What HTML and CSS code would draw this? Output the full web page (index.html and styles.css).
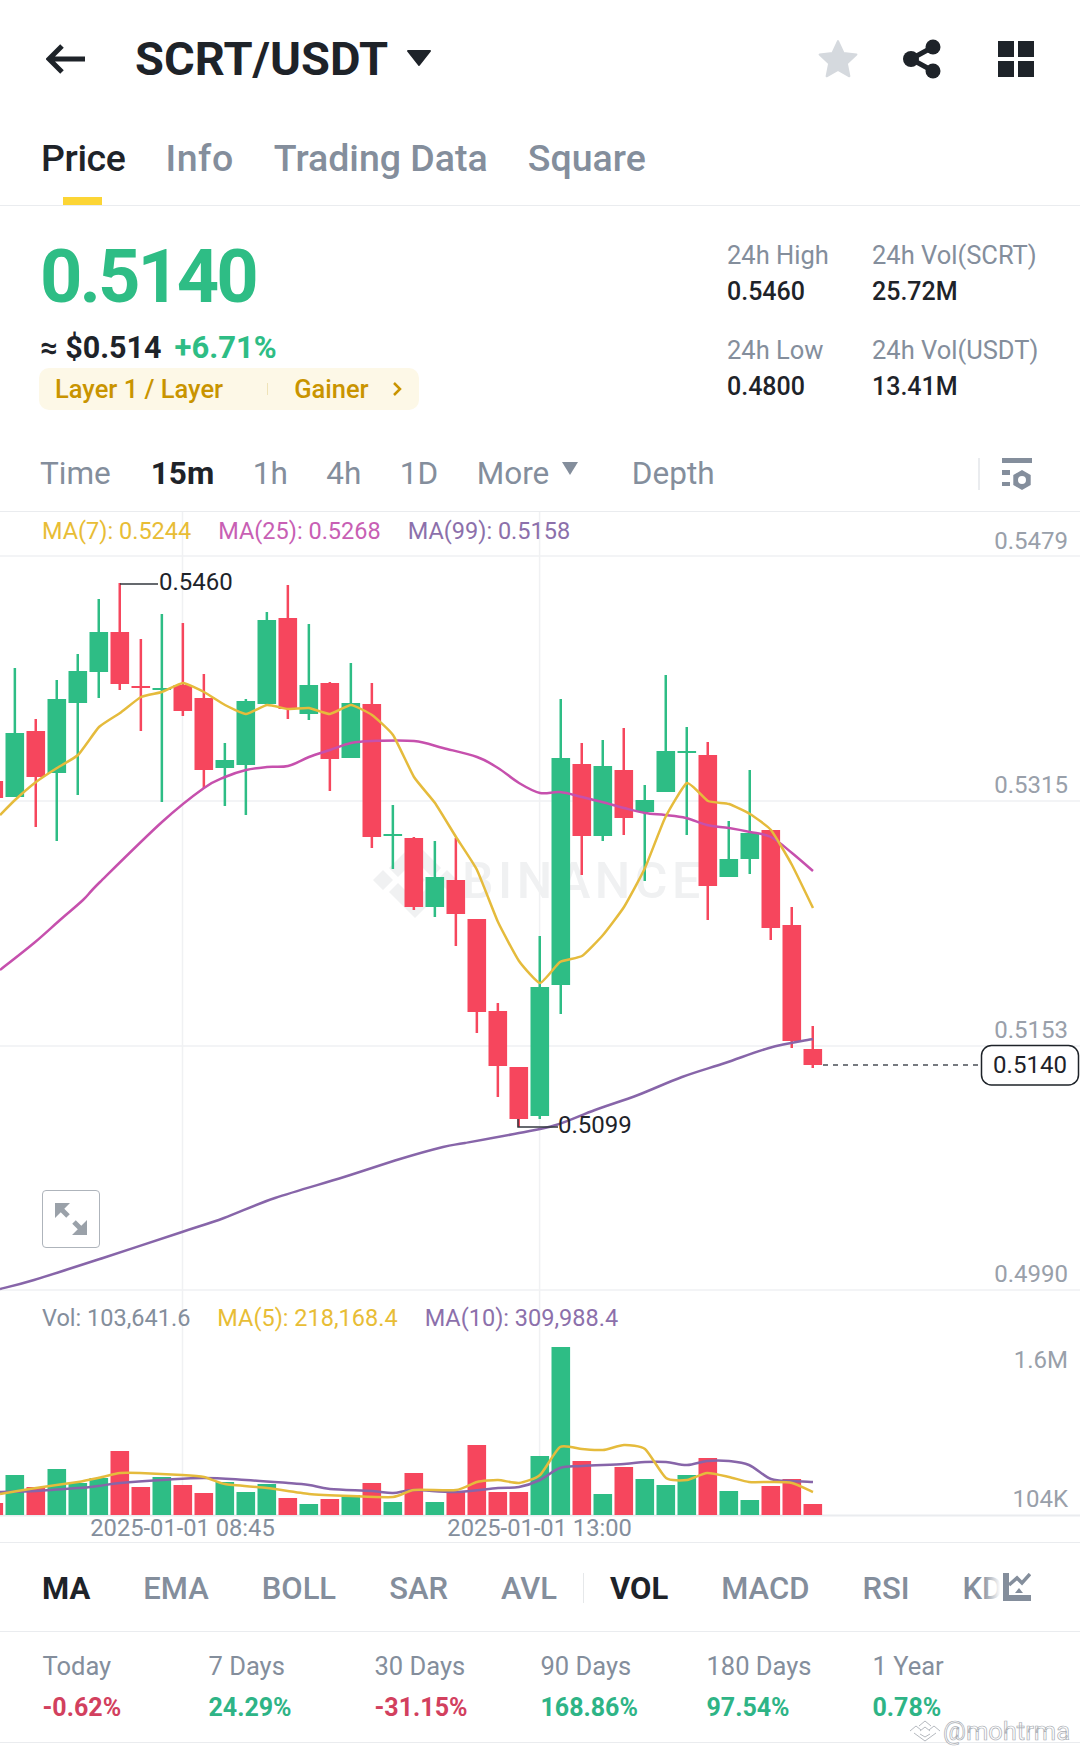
FILE: index.html
```html
<!DOCTYPE html>
<html lang="en">
<head>
  <meta charset="UTF-8">
  <meta name="viewport" content="width=device-width, initial-scale=1.0">
  <title>SCRT/USDT</title>
  <link rel="stylesheet" href="styles.css">
</head>
<body>
  <header class="topbar">
    <svg class="back-icon" viewBox="0 0 40 30"><path d="M39 15H3M16 2 3 15l13 13"/></svg>
    <h1 class="pair">SCRT/USDT</h1>
    <svg class="pair-caret" viewBox="0 0 26 18"><path d="M2 2h22L13 16z"/></svg>
    <div class="topbar-icons">
      <svg class="star-icon" viewBox="0 0 40 38"><path d="M20 2l5.2 11.3 12.3 1.5-9.1 8.4 2.4 12.2L20 29.3 9.2 35.4l2.4-12.2-9.1-8.4 12.3-1.5z"/></svg>
      <svg class="share-icon" viewBox="0 0 38 38"><circle cx="30" cy="7" r="7.5"/><circle cx="8" cy="19" r="8"/><circle cx="30" cy="31" r="7.5"/><path d="M30 7 8 19l22 12"/></svg>
      <svg class="grid-icon" viewBox="0 0 36 36"><rect x="0" y="0" width="16" height="16"/><rect x="20" y="0" width="16" height="16"/><rect x="0" y="20" width="16" height="16"/><rect x="20" y="20" width="16" height="16"/></svg>
    </div>
  </header>

  <nav class="tabs">
    <a class="tab active">Price</a>
    <a class="tab tab-info">Info</a>
    <a class="tab">Trading Data</a>
    <a class="tab">Square</a>
  </nav>

  <section class="summary">
    <div class="summary-left">
      <div class="last-price">0.5140</div>
      <div class="change-row"><span class="usd">≈ $0.514</span><span class="change">+6.71%</span></div>
      <div class="tag-pill">
        <span>Layer 1 / Layer</span>
        <i class="tag-divider"></i>
        <span>Gainer</span>
        <svg class="tag-chevron" viewBox="0 0 10 16"><path d="M2 2l6 6-6 6"/></svg>
      </div>
    </div>
    <div class="summary-stats">
      <div class="stat"><span class="stat-label">24h High</span><span class="stat-value">0.5460</span></div>
      <div class="stat"><span class="stat-label">24h Vol(SCRT)</span><span class="stat-value">25.72M</span></div>
      <div class="stat"><span class="stat-label">24h Low</span><span class="stat-value">0.4800</span></div>
      <div class="stat"><span class="stat-label">24h Vol(USDT)</span><span class="stat-value">13.41M</span></div>
    </div>
  </section>

  <div class="timeframes">
    <span class="tf-first">Time</span>
    <span class="selected">15m</span>
    <span>1h</span>
    <span>4h</span>
    <span>1D</span>
    <span class="more">More<svg class="more-caret" viewBox="0 0 16 13"><path d="M0 0h16L8 13z"/></svg></span>
    <span class="depth">Depth</span>
    <i class="tf-divider"></i>
    <svg class="tf-icon" viewBox="0 0 30 32">
      <rect x="0" y="0" width="30" height="5"/>
      <rect x="0" y="12" width="8" height="5"/>
      <rect x="0" y="24" width="8" height="4"/>
      <path fill-rule="evenodd" d="M20 12l8.700 5v10L20 32l-8.700-5V17zM20 18a4 4 0 1 0 0 8 4 4 0 0 0 0-8z"/>
    </svg>
  </div>

  <section class="chart">
    <svg class="chart-svg" viewBox="0 512 1080 1030">
      <g class="grid-lines">
        <path d="M0 556H1080M0 801H1080M0 1046H1080M0 1290H1080M182.500 512V1515M539.600 512V1515"/>
        <path class="vol-base" d="M0 1515.500H1080"/>
      </g>
      <g class="brand-mark">
        <path d="M383 870l10 10-10 10-10-10zM415 870l10 10-10 10-10-10zM447 870l10 10-10 10-10-10zM415 842l26 26-9 9-17-17-17 17-9-9zM415 918l26-26-9-9-17 17-17-17-9 9z"/>
        <text x="462" y="898">BINANCE</text>
      </g>
      <g id="volumes"></g>
      <g id="candles"></g>
      <g id="lines"></g>
      <path class="marker-line" d="M120 584H158M518 1119V1127H558"/>
      <text class="marker-text" x="159" y="582">0.5460</text>
      <text class="marker-text" x="558" y="1125">0.5099</text>
      <text class="axis-label" x="1068" y="541">0.5479</text>
      <text class="axis-label" x="1068" y="785">0.5315</text>
      <text class="axis-label" x="1068" y="1030">0.5153</text>
      <text class="axis-label" x="1068" y="1274">0.4990</text>
      <text class="axis-label" x="1068" y="1360">1.6M</text>
      <text class="axis-label" x="1068" y="1499">104K</text>
      <text class="date-label" x="182.500" y="1528">2025-01-01 08:45</text>
      <text class="date-label" x="539.600" y="1528">2025-01-01 13:00</text>
      <path class="price-dash" d="M823 1065H981"/>
      <rect class="price-box" x="981.500" y="1045.500" width="97" height="39.500" rx="10"/>
      <text class="price-box-text" x="1030" y="1065">0.5140</text>
    </svg>

    <div class="legend legend-price">
      <span class="c-yellow">MA(7): 0.5244</span>
      <span class="c-magenta">MA(25): 0.5268</span>
      <span class="c-purple">MA(99): 0.5158</span>
    </div>
    <div class="legend legend-vol">
      <span class="c-grey">Vol: 103,641.6</span>
      <span class="c-yellow">MA(5): 218,168.4</span>
      <span class="c-purple">MA(10): 309,988.4</span>
    </div>

    <button class="expand-btn">
      <svg viewBox="0 0 34 34"><path d="M1 1h15L1 16zM33 33H18l15-15z"/><path class="expand-stem" d="M8 8l6 6M26 26l-6-6"/></svg>
    </button>
  </section>

  <div class="indicators">
    <span class="selected">MA</span>
    <span>EMA</span>
    <span>BOLL</span>
    <span>SAR</span>
    <span>AVL</span>
    <i class="ind-divider"></i>
    <span class="selected">VOL</span>
    <span>MACD</span>
    <span>RSI</span>
    <span>KDJ</span>
    <div class="ind-icon-wrap">
      <svg class="ind-icon" viewBox="0 0 28 28">
        <path d="M0 0h6v22h22v6H0z"/>
        <path class="ind-zig" d="M6 12l8-7 5 5 8-9"/>
        <path d="M16 15l4 5h-8z"/>
      </svg>
    </div>
  </div>

  <div class="returns">
    <div class="ret"><span class="ret-label">Today</span><span class="ret-value down">-0.62%</span></div>
    <div class="ret"><span class="ret-label">7 Days</span><span class="ret-value up">24.29%</span></div>
    <div class="ret"><span class="ret-label">30 Days</span><span class="ret-value down">-31.15%</span></div>
    <div class="ret"><span class="ret-label">90 Days</span><span class="ret-value up">168.86%</span></div>
    <div class="ret"><span class="ret-label">180 Days</span><span class="ret-value up">97.54%</span></div>
    <div class="ret"><span class="ret-label">1 Year</span><span class="ret-value up">0.78%</span></div>
  </div>

  <div class="credit">
    <svg class="credit-logo" viewBox="0 0 32 22"><path d="M10 6l6-5 6 5M1 11l6-5 5 4M31 11l-6-5-5 4M11 11l5-4 5 4M5 13l11 8 11-8M11 14l5 3 5-3"/></svg>
    <span>@mohtrma</span>
  </div>

  <script src="chart.js"></script>
</body>
</html>
```

FILE: styles.css
```css
* { box-sizing: border-box; }
html, body {
  margin: 0;
  padding: 0;
  background: #fff;
}
body {
  position: relative;
  width: 1080px;
  height: 1752px;
  overflow: hidden;
  font-family: Roboto, "Liberation Sans", sans-serif;
  color: #1e2329;
}

/* top bar */
.topbar {
  display: flex;
  align-items: center;
  height: 103px;
  padding: 14px 0 0 46px;
}
.back-icon {
  width: 40px;
  height: 30px;
  fill: none;
  stroke: #1e2329;
  stroke-width: 5;
}
.pair {
  margin: 0 0 0 49px;
  font-size: 47px;
  line-height: 60px;
  font-weight: 700;
}
.pair-caret {
  width: 26px;
  height: 18px;
  margin: -2px 0 0 18px;
  fill: #1e2329;
  stroke: #1e2329;
  stroke-width: 2;
  stroke-linejoin: round;
}
.topbar-icons {
  display: flex;
  align-items: center;
  margin-left: auto;
  margin-right: 46px;
}
.star-icon {
  width: 42px;
  height: 40px;
  fill: #d5d9de;
  stroke: #d5d9de;
  stroke-width: 2;
  stroke-linejoin: round;
}
.share-icon {
  width: 38px;
  height: 38px;
  margin-left: 44px;
  fill: #1e2329;
  stroke: none;
  overflow: visible;
}
.share-icon path {
  fill: none;
  stroke: #1e2329;
  stroke-width: 5;
}
.grid-icon {
  width: 36px;
  height: 36px;
  margin-left: 57px;
  fill: #1e2329;
}

/* tabs */
.tabs {
  display: flex;
  gap: 40px;
  height: 103px;
  padding: 35px 0 0 41px;
  border-bottom: 1px solid #eaecef;
}
.tab {
  position: relative;
  font-size: 37.500px;
  line-height: 40px;
  font-weight: 500;
  color: #848e9c;
}
.tab-info { letter-spacing: 0.600px; }
.tab.active {
  color: #1e2329;
  letter-spacing: -0.400px;
}
.tab.active::after {
  content: "";
  position: absolute;
  left: 22px;
  top: 59px;
  width: 39px;
  height: 8px;
  background: #fcd535;
}

/* price summary */
.summary {
  display: flex;
  height: 234px;
}
.summary-left {
  width: 727px;
  padding: 34px 0 0 39px;
}
.last-price {
  font-size: 74px;
  line-height: 74px;
  font-weight: 700;
  letter-spacing: -3px;
  color: #2ebd85;
  padding-left: 1px;
}
.change-row {
  display: flex;
  gap: 13px;
  margin-top: 16px;
  font-size: 30.500px;
  line-height: 36px;
  font-weight: 700;
}
.usd { padding-left: 1px; }
.change {
  font-size: 31px;
  color: #2ebd85;
}
.tag-pill {
  display: flex;
  align-items: center;
  width: 380px;
  height: 42px;
  margin-top: 2px;
  padding-left: 16px;
  border-radius: 10px;
  background: #fdf8e7;
  color: #c99400;
  font-size: 25.500px;
  font-weight: 500;
}
.tag-divider {
  width: 1px;
  height: 12px;
  margin: 0 26px 0 44px;
  background: #efe3b8;
}
.tag-chevron {
  width: 10px;
  height: 16px;
  margin-left: 23px;
  fill: none;
  stroke: #c99400;
  stroke-width: 2.500;
}
.summary-stats {
  display: grid;
  grid-template-columns: 145px 1fr;
  grid-auto-rows: 95px;
  flex: 1;
  padding-top: 31px;
}
.stat {
  display: flex;
  flex-direction: column;
  gap: 1px;
}
.stat-label {
  font-size: 25.500px;
  line-height: 36px;
  color: #848e9c;
}
.stat-value {
  font-size: 25px;
  line-height: 36px;
  font-weight: 500;
}

/* time frames */
.timeframes {
  display: flex;
  align-items: center;
  gap: 38.500px;
  height: 72px;
  padding: 0 0 4px 40px;
  border-bottom: 1px solid #eaecef;
  font-size: 31.500px;
  color: #848e9c;
}
.tf-first { margin-right: 1.500px; }
.timeframes .selected {
  color: #1e2329;
  font-weight: 700;
}
.more {
  display: flex;
}
.more-caret {
  width: 16px;
  height: 13px;
  margin: 7px 0 0 13px;
  fill: #848e9c;
}
.depth { margin-left: 15px; }
.tf-divider {
  width: 2px;
  height: 32px;
  margin-left: auto;
  background: #eaecef;
}
.tf-icon {
  width: 30px;
  height: 32px;
  margin: 0 48px 0 -16.500px;
  fill: #848e9c;
}

/* chart */
.chart {
  position: relative;
  height: 1030px;
}
.chart-svg {
  display: block;
  position: absolute;
  left: 0;
  top: 0;
  width: 1080px;
  height: 1030px;
}
.grid-lines path {
  fill: none;
  stroke: #f0f1f3;
  stroke-width: 1.500;
}
.grid-lines .vol-base {
  stroke: #eaecef;
  stroke-width: 2;
}
.brand-mark {
  fill: #f0f1f2;
}
.brand-mark text {
  font-size: 50px;
  font-weight: 500;
  letter-spacing: 4.500px;
}
.marker-line {
  fill: none;
  stroke: #33383f;
  stroke-width: 1.500;
}
.marker-text,
.axis-label,
.date-label,
.price-box-text {
  font-size: 24px;
  dominant-baseline: central;
}
.marker-text { fill: #1e2329; }
.axis-label {
  fill: #99a0aa;
  text-anchor: end;
}
.date-label {
  font-size: 23.700px;
  fill: #848e9c;
  text-anchor: middle;
}
.price-box {
  fill: #fff;
  stroke: #1e2329;
  stroke-width: 1.500;
}
.price-box-text {
  fill: #1e2329;
  text-anchor: middle;
}
.price-dash {
  fill: none;
  stroke: #4a4f57;
  stroke-width: 1.500;
  stroke-dasharray: 5 5;
}
.candle-up { fill: #2ebd85; }
.candle-down { fill: #f6465d; }
.ma-line {
  fill: none;
  stroke-width: 2.500;
  stroke-linejoin: round;
}
.ma7 { stroke: #e5bb3c; }
.ma25 { stroke: #c650ad; }
.ma99 { stroke: #8765a9; }

.legend {
  position: absolute;
  left: 42px;
  display: flex;
  gap: 27px;
  font-size: 23.500px;
  line-height: 30px;
}
.legend-price { top: 4px; }
.legend-vol { top: 791px; }
.c-yellow { color: #e8bd36; }
.c-magenta { color: #c85fb4; }
.c-purple { color: #8c70ab; }
.c-grey { color: #848e9c; }

.expand-btn {
  position: absolute;
  left: 42px;
  top: 678px;
  display: flex;
  align-items: center;
  justify-content: center;
  width: 58px;
  height: 58px;
  padding: 0;
  background: #fff;
  border: 1.500px solid #aeb4bb;
  border-radius: 4px;
}
.expand-btn svg {
  width: 34px;
  height: 34px;
  fill: #9aa1a9;
}
.expand-stem {
  fill: none;
  stroke: #9aa1a9;
  stroke-width: 5;
}

/* indicator tabs */
.indicators {
  position: relative;
  display: flex;
  align-items: center;
  gap: 53px;
  height: 90px;
  padding: 2px 0 0 42px;
  border-top: 1px solid #eaecef;
  border-bottom: 1px solid #eaecef;
  overflow: hidden;
  white-space: nowrap;
  font-size: 31px;
  font-weight: 500;
  color: #848e9c;
}
.indicators .selected {
  color: #1e2329;
  font-weight: 700;
}
.ind-divider {
  flex: none;
  width: 1px;
  height: 30px;
  margin: 0 -27px;
  background: #e6e8ea;
}
.ind-icon-wrap {
  position: absolute;
  right: 0;
  top: 0;
  display: flex;
  width: 106px;
  height: 88px;
  padding: 30px 0 0 29px;
  background: linear-gradient(to right, rgba(255,255,255,0) 8%, #fff 25%);
}
.ind-icon {
  width: 28px;
  height: 28px;
  fill: #848e9c;
}
.ind-zig {
  fill: none;
  stroke: #848e9c;
  stroke-width: 3.500;
}

/* returns */
.returns {
  display: grid;
  grid-template-columns: repeat(6, 166px);
  height: 111px;
  padding: 16px 0 0 42.500px;
  border-bottom: 1px solid #eaecef;
}
.ret {
  display: flex;
  flex-direction: column;
  gap: 6px;
}
.ret-label {
  font-size: 25.500px;
  line-height: 36px;
  color: #848e9c;
}
.ret-value {
  font-size: 25px;
  line-height: 36px;
  font-weight: 700;
}
.up { color: #2eb486; }
.down { color: #d2405e; }

/* corner credit */
.credit {
  position: absolute;
  left: 909px;
  top: 1717px;
  display: flex;
  align-items: center;
  gap: 2px;
}
.credit-logo {
  width: 32px;
  height: 22px;
  fill: none;
  stroke: #b5b9bf;
  stroke-width: 1;
}
.credit span {
  font-size: 25.500px;
  line-height: 28px;
  color: #fff;
  -webkit-text-stroke: 0.700px #a9adb3;
}
```

FILE: chart.js
```js
const STEP = 21;
const FIRST_X = 14.8;
const BODY_W = 18.6;
const WICK_W = 2.5;

function xAt(i) {
  return FIRST_X + i * STEP;
}

// wick top, body top, body bottom, wick bottom, up? (page pixels)
const candles = [
  [781, 781, 798, 798, 0],
  [668, 733, 797, 797, 1],
  [719, 731, 777, 827, 0],
  [680, 699, 773, 841, 1],
  [654, 671, 703, 795, 1],
  [599, 632, 672, 698, 1],
  [583, 632, 684, 690, 0],
  [639, 686, 688, 731, 0],
  [614, 688, 690, 802, 1],
  [623, 685, 711, 716, 0],
  [674, 698, 770, 788, 0],
  [743, 760, 768, 806, 1],
  [699, 701, 765, 815, 1],
  [612, 620, 704, 704, 1],
  [585, 618, 709, 719, 0],
  [624, 685, 714, 720, 1],
  [682, 683, 759, 791, 0],
  [663, 703, 758, 758, 1],
  [683, 704, 837, 848, 0],
  [805, 834, 836, 869, 1],
  [837, 838, 907, 910, 0],
  [841, 877, 907, 917, 1],
  [838, 880, 914, 946, 0],
  [919, 919, 1012, 1033, 0],
  [1003, 1011, 1066, 1097, 0],
  [1067, 1067, 1119, 1127, 0],
  [936, 987, 1116, 1119, 1],
  [699, 758, 985, 1014, 1],
  [743, 764, 836, 875, 0],
  [740, 766, 836, 841, 1],
  [728, 770, 818, 835, 0],
  [785, 800, 812, 881, 1],
  [675, 751, 792, 792, 1],
  [727, 751, 753, 835, 1],
  [742, 755, 886, 920, 0],
  [821, 859, 877, 877, 1],
  [770, 833, 859, 874, 1],
  [830, 830, 928, 940, 0],
  [907, 925, 1041, 1048, 0],
  [1026, 1049, 1065, 1068, 0]
];

// top of each volume bar, same order as candles
const volumeTops = [
  1503, 1475, 1487, 1469, 1483, 1478, 1451, 1487, 1477, 1485,
  1493, 1482, 1492, 1484, 1498, 1504, 1499, 1495, 1483, 1502,
  1473, 1502, 1492, 1445, 1492, 1492, 1456, 1347, 1461, 1494,
  1467, 1479, 1485, 1475, 1458, 1491, 1500, 1486, 1479, 1504
];
const VOL_BASE = 1515;

const ma7 = [[0,815],[15,800],[36,782],[57,768],[78,755],[99,727],[120,713],[141,697],[162,692],[183,683],[204,692],[225,705],[246,714],[267,705],[288,709],[309,708],[330,714],[351,705],[372,715],[393,735],[414,777],[435,803],[456,837],[477,870],[498,922],[519,961],[540,983],[560,962],[582,956],[603,935],[624,907],[645,868],[665,818],[687,783],[708,801],[729,804],[750,814],[771,830],[792,865],[813,908]];
const ma25 = [[0,970],[34,943],[60,920],[83,900],[100,882],[162,822],[204,788],[225,777],[246,770],[267,767],[288,766],[309,757],[330,750],[351,743],[372,741],[414,741],[443,748],[477,757],[498,768],[519,783],[540,793],[560,792],[582,797],[602,802],[624,808],[645,813],[665,815],[686,818],[707,825],[729,828],[750,832],[771,837],[792,853],[813,871]];
const ma99 = [[0,1289],[34,1280],[103,1258],[182,1232],[224,1218],[275,1198],[344,1177],[400,1159],[443,1147],[465,1143],[519,1133],[556,1125],[595,1110],[638,1095],[682,1077],[725,1063],[769,1048],[813,1039]];
const volMa5 = [[0,1494],[36,1488],[78,1482],[98,1478],[120,1473],[140,1473],[182,1475],[204,1477],[225,1484],[267,1488],[309,1494],[351,1496],[393,1497],[414,1490],[456,1490],[477,1482],[498,1480],[519,1483],[540,1475],[560,1447],[582,1449],[603,1450],[624,1445],[645,1449],[666,1478],[687,1480],[707,1473],[729,1477],[749,1482],[771,1482],[792,1483],[813,1492]];
const volMa10 = [[0,1492],[36,1491],[78,1488],[98,1486],[120,1483],[162,1480],[204,1478],[246,1480],[288,1483],[309,1485],[330,1489],[372,1491],[393,1493],[414,1490],[456,1492],[498,1488],[519,1487],[540,1480],[560,1468],[582,1466],[624,1464],[645,1462],[666,1462],[687,1465],[707,1461],[729,1461],[749,1465],[771,1479],[792,1481],[813,1482]];

function rect(x, y, w, h, cls) {
  return `<rect x="${x.toFixed(1)}" y="${y}" width="${w}" height="${h}" class="${cls}"/>`;
}

// catmull-rom through the points; larger soft = sharper corners
function line(pts, cls, soft = 6) {
  let d = `M${pts[0][0]} ${pts[0][1]}`;
  for (let i = 0; i < pts.length - 1; i++) {
    const p0 = pts[Math.max(i - 1, 0)];
    const p1 = pts[i];
    const p2 = pts[i + 1];
    const p3 = pts[Math.min(i + 2, pts.length - 1)];
    const c1x = p1[0] + (p2[0] - p0[0]) / soft;
    const c1y = p1[1] + (p2[1] - p0[1]) / soft;
    const c2x = p2[0] - (p3[0] - p1[0]) / soft;
    const c2y = p2[1] - (p3[1] - p1[1]) / soft;
    d += `C${c1x.toFixed(1)} ${c1y.toFixed(1)} ${c2x.toFixed(1)} ${c2y.toFixed(1)} ${p2[0]} ${p2[1]}`;
  }
  return `<path d="${d}" class="ma-line ${cls}"/>`;
}

let candleHtml = "";
let volumeHtml = "";
candles.forEach((c, n) => {
  const x = xAt(n - 1);
  const cls = c[4] ? "candle-up" : "candle-down";
  candleHtml += rect(x - WICK_W / 2, c[0], WICK_W, c[3] - c[0], cls);
  candleHtml += rect(x - BODY_W / 2, c[1], BODY_W, c[2] - c[1], cls);
  volumeHtml += rect(x - BODY_W / 2, volumeTops[n], BODY_W, VOL_BASE - volumeTops[n], cls);
});

document.getElementById("candles").innerHTML = candleHtml;
document.getElementById("volumes").innerHTML = volumeHtml;
document.getElementById("lines").innerHTML =
  line(ma99, "ma99") + line(ma25, "ma25") + line(ma7, "ma7", 14) +
  line(volMa10, "ma99") + line(volMa5, "ma7", 10);
```
